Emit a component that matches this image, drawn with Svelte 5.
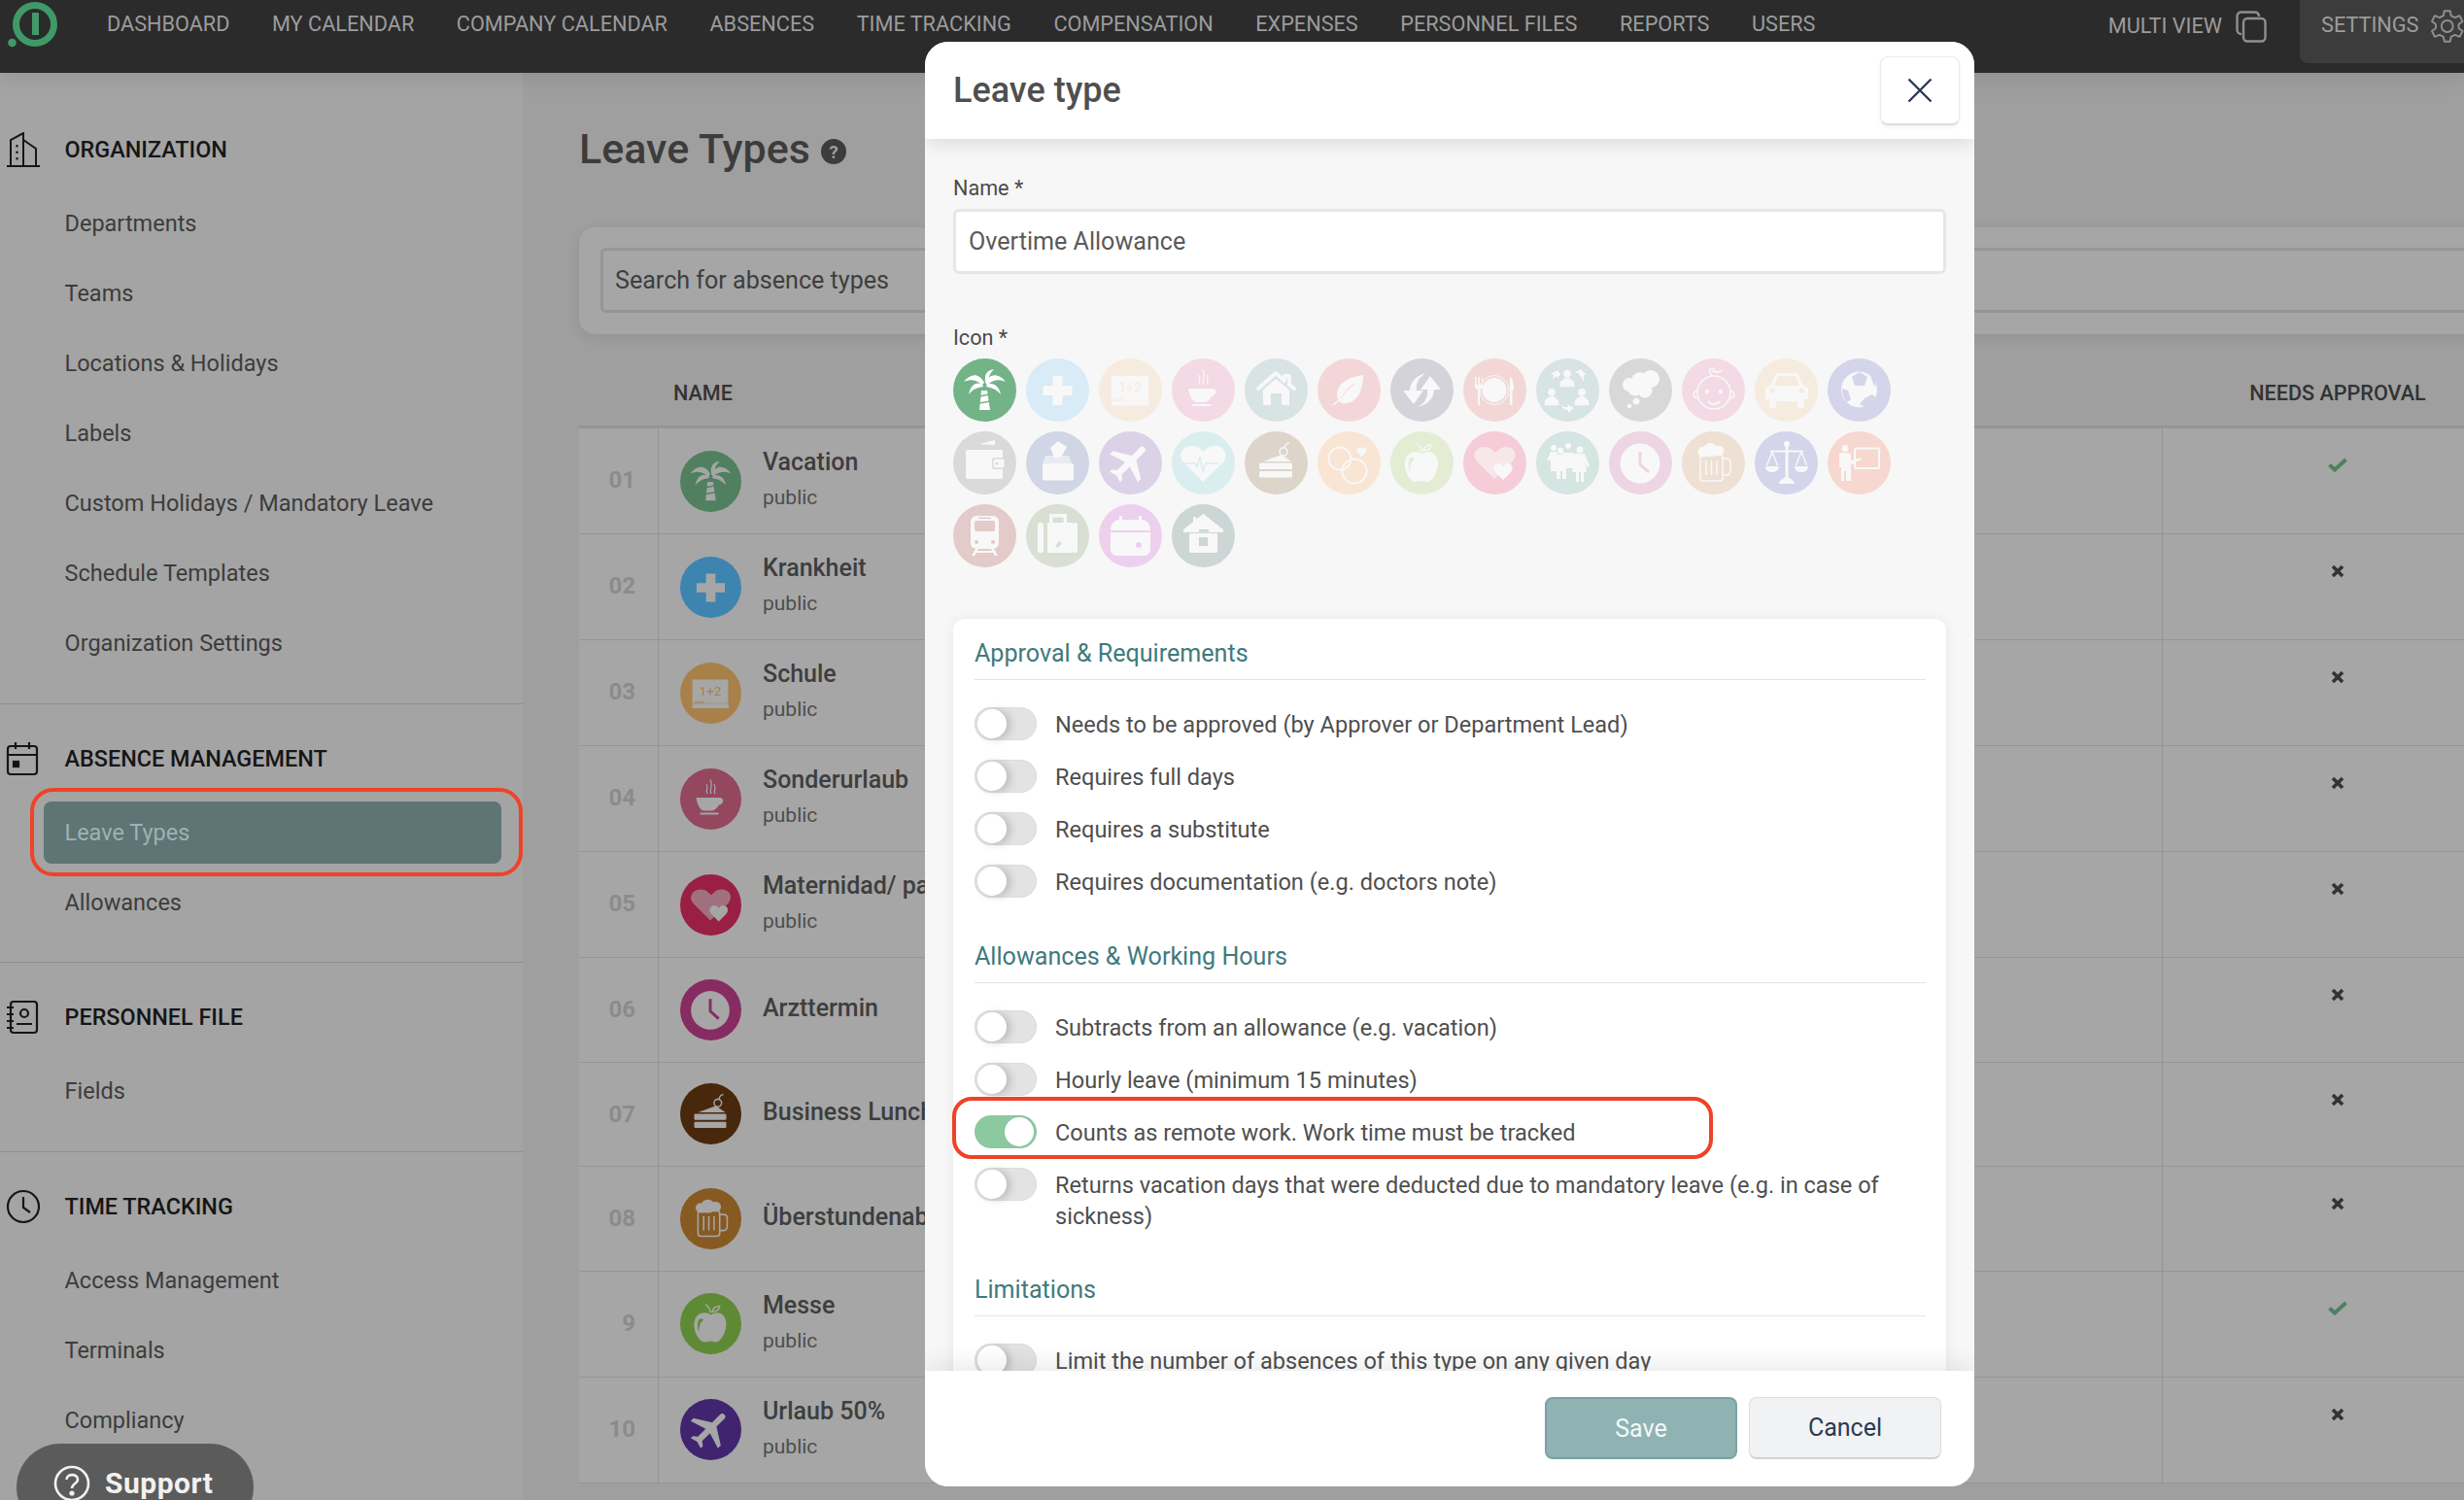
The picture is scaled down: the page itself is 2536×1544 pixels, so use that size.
<script>
  const person = (x, y, s = 1) => `<g transform="translate(${x} ${y}) scale(${s})"><circle cy="-7" r="3.6"/><path d="M-7 6 V3 C-7 0 -3 -1 -2 -3 H2 C3 -1 7 0 7 3 V6Z"/></g>`;
  const glyphs = [
    `<path d="M29 33 L35 33 L38 53 L27 53Z"/><path class="cs" stroke-width="1.5" d="M27 39 L37 37 M27 46 L38 44"/><path d="M32 25 C27 15 18 15 11 24 C18 21 24 22 30 27Z M33 25 C38 15 47 15 54 24 C47 21 41 22 35 27Z M33 24 C32 16 35 12 42 11 C38 15 36 19 36 24Z M30 26 C22 24 18 28 16 37 C20 32 24 30 31 29Z M35 26 C42 25 47 28 49 37 C45 32 40 30 34 29Z"/>`,
    `<path d="M27.5 18h10v10h10v10h-10v10h-10v-10h-10v-10h10z"/>`,
    `<rect x="13" y="18" width="38" height="25" rx="1"/><rect x="13" y="43.500" width="38.500" height="5"/><rect class="cut" x="15" y="41" width="11" height="2.500" opacity=".5"/><text class="cut" x="32" y="35" text-anchor="middle" font-family="Roboto, sans-serif" font-size="14">1+2</text>`,
    `<path d="M17 31 H42 C47 31 47 38 41 39 C39 43 36 45 33 45 H26 C21 45 18 38 17 31Z"/><rect x="21" y="47" width="20" height="2" rx="1"/><path d="M29 27 C26 23 31 21 28 17 M33 27 C30 22 36 19 32 12 M37 27 C35 23 39 21 36 17" fill="none" stroke="currentColor" stroke-width="1.300"/>`,
    `<path d="M14 31 L32 15 L41 23 V18 H46 V27 L51 31" fill="none" stroke="currentColor" stroke-width="4" stroke-linejoin="round" stroke-linecap="round"/><path d="M19 48 V32 L32 21 L46 32 V48 H38 V36 H27 V48Z"/>`,
    `<path d="M47 17 C31 19 21 26 20 36 C20 41 22 45 25 46 C38 48 47 36 47 17Z"/><path d="M16 48 L24 41 C28 34 32 30 38 26" class="cs" stroke-width="1" /><path d="M16 48 L24 41" fill="none" stroke="currentColor" stroke-width="1.500"/>`,
    `<path d="M37 15 C30 19 26 24 27 33 H34 L24 47 L13 33 H20 C20 24 27 17 37 15Z"/><path d="M28 50 C35 46 39 41 38 32 H31 L41 18 L52 32 H45 C45 41 38 48 28 50Z"/>`,
    `<path d="M12 19 V28 C12 31 14 32 15 32 V48 H17 V32 C18 32 20 31 20 28 V19 H19 V27 H17 V19 H15.500 V27 H13.500 V19Z"/><circle cx="32" cy="32.500" r="12.500"/><circle cx="32" cy="32.500" r="15" fill="none" stroke="currentColor" stroke-width="1"/><path d="M48 48 V19 C51 20 52 25 52 33 H50.500 V48Z"/>`,
    `${person(32, 23, 1.05)}${person(16, 42, 1.05)}${person(47, 42, 1.05)}<path d="M22 12 L15 16 L18 17 L17 23 C18 20 20 19 22 18 L22 21 L25 16Z M46 11 L40 14 L43 15 C45 17 47 20 49 24 L49 17 L52 17Z M26 49 C29 50 31 50 33 50 L32 47 L39 51 L33 56 L33 53 C30 53 28 52 26 49Z"/>`,
    `<circle cx="21" cy="27" r="7"/><circle cx="32" cy="23" r="9"/><circle cx="43" cy="21" r="9"/><circle cx="37" cy="33" r="7.500"/><circle cx="27" cy="31" r="7.500"/><circle cx="28" cy="44" r="3.500"/><circle cx="21" cy="49" r="2.300"/>`,
    `<g fill="none" stroke="currentColor" stroke-width="1.600"><circle cx="33" cy="35" r="17"/><path d="M16 33 C11 34 11 40 16 41 M50 33 C55 34 55 40 50 41 M31 18 C27 13 29 9 32 10 C35 11 32 15 31 13 M33 13 C36 15 39 14 41 12"/><path d="M27 44 C30 48 36 48 39 44" stroke-width="2"/></g><circle cx="26" cy="34" r="2.300"/><circle cx="40" cy="34" r="2.300"/>`,
    `<path d="M11 30 L16 28 L21 17 C22 15 23 15 25 15 H41 C43 15 44 15 45 17 L50 28 L55 30 V42 H51 V49 C51 52 44 52 44 49 V44 H22 V49 C22 52 15 52 15 49 V42 H11Z"/><path class="cut" d="M20 28 L24 18 H42 L46 28Z"/><circle class="cut" cx="18" cy="33" r="2.500"/><circle class="cut" cx="48" cy="33" r="2.500"/>`,
    `<circle cx="32.500" cy="32" r="18.500"/><path class="cut" d="M25 19 L33 14 L41 19 L38 28 L28 28Z M15 31 L21 33 L24 42 L20 45 C17 42 15 37 15 31Z M38 41 L46 37 L49 40 C47 45 43 48 39 50 L33 47Z M44 17 L49 22 L50 29 L47 26Z"/>`,
    `<path d="M28 12 L44 8 L44 13Z" transform="translate(-1 1)"/><rect x="13" y="19" width="38" height="30" rx="2"/><rect class="cut" x="40" y="27" width="14" height="12" rx="3"/><rect x="41.500" y="28.500" width="11" height="9" rx="2"/><circle class="cut" cx="45" cy="33" r="1.500"/>`,
    `<path d="M17 33 L20 25 H44 L47 33Z" opacity=".6"/><rect x="17" y="33" width="32" height="17.500" rx="2"/><path d="M25 17 L33 10 L42 16 L36 27 H29Z"/>`,
    `<g transform="translate(32.500 32.500) rotate(45) scale(2.150) translate(-12 -12)"><path d="M21 16v-2l-8-5V3.500a1.500 1.500 0 0 0-3 0V9l-8 5v2l8-2.500V19l-2 1.500V22l3.500-1 3.500 1v-1.500L13 19v-5.500l8 2.500z"/></g>`,
    `<path d="M32 52 L13 33 C5 24 12 14 21 15 C27 15 30 18 32.500 21 C35 18 38 15 44 15 C53 14 60 24 52 33Z"/><path class="cs" stroke-width="1.500" d="M11 33 H24 L26 37 L29 26 L32 41 L35 33 H48"/>`,
    `<path d="M19 31 L38 24 L48 31Z"/><rect x="15" y="32.500" width="34" height="6.500" rx="1"/><rect x="15" y="41" width="34" height="6.500" rx="1"/><circle cx="40" cy="21" r="4" fill="none" stroke="currentColor" stroke-width="1.500"/><path d="M41 17 C42 14 44 12 46 12" fill="none" stroke="currentColor" stroke-width="1.500"/>`,
    `<g fill="none" stroke="currentColor" stroke-width="2"><circle cx="23" cy="28" r="11.500"/><circle cx="38" cy="41" r="12.500"/></g><path d="M45 26 L41 21 C39 17 44 15 45 18 C47 15 52 17 50 21Z"/>`,
    `<path d="M33 23 C38 19 48 20 49 32 C49 42 43 52 38 52 C36 52 34 51 32 51 C30 51 28 52 26 52 C21 52 14 42 15 32 C16 20 27 19 33 23Z"/><path class="cut" d="M21 27 C18 30 18 37 20 41 C20 35 21 31 25 28Z"/><path d="M32 21 C32 17 30 14 27 12 M34 20 C35 16 38 14 42 14 C42 17 39 20 34 20Z" fill="none" stroke="currentColor" stroke-width="1.500"/>`,
    `<path opacity=".6" d="M32 49 L14 31 C8 23 14 16 22 16 C27 16 30 19 33 22 C36 19 39 16 44 16 C52 16 57 23 51 31Z"/><path d="M41 50 L33 42 C29 37 33 33 36 33 C38 33 40 34 41 36 C42 34 44 33 46 33 C49 33 53 37 49 42Z"/>`,
    `<circle cx="18" cy="17" r="3"/><circle cx="33" cy="15" r="3"/><circle cx="25" cy="20" r="3.200"/><circle cx="45" cy="19" r="3.500"/><path d="M11 30 L15 21 H21 L24 30 V41 H15 V30Z M27 22 H39 L41 38 H28Z M19 24 H31 L36 36 L32 37 L31 33 V49 H27 V41 H25 V49 H21 V33 L19 37 L15 36Z M40 23 H50 L55 36 L52 37 L50 31 L52 42 H49 V52 H46 V42 H44 V52 H41 V42 H37 L40 31 L37 37 L34 36Z"/>`,
    `<circle cx="32" cy="33" r="20.500"/><path class="cs" stroke-width="3" d="M32 21 V34 L41 42"/>`,
    `<g fill="none" stroke="currentColor" stroke-width="1.600"><rect x="19" y="24" width="23" height="27" rx="3"/><path d="M42 28 H46 C49 28 50 30 50 32 V40 C50 44 48 45 46 45 H42 M25 30 V45 M30.500 30 V45 M36 30 V45" /></g><path d="M17 23 C15 19 19 15 23 16 C25 11 33 11 35 15 C40 13 45 17 43 22 C42 26 38 25 35 25 C31 27 27 26 25 26 C22 27 18 26 17 23Z"/>`,
    `<rect x="31.500" y="14" width="3" height="34"/><circle cx="33" cy="13" r="3"/><path d="M25 54 C25 50 30 49 31 47 H35 C36 49 41 50 41 54Z"/><rect x="16" y="19.500" width="34" height="2"/><path d="M11 36 H25 C25 44 11 44 11 36Z M41 36 H55 C55 44 41 44 41 36Z"/><path d="M18 21 L12.500 35 M18 21 L23.500 35 M48 21 L42.500 35 M48 21 L53.500 35" fill="none" stroke="currentColor" stroke-width="1.500"/>`,
    `<circle cx="18" cy="17.500" r="3.500"/><path d="M12 24 C12 22 14 22 15 22 H21 C23 22 24 23 24 25 V30 L34 27 L35 29 L24 34 V51 H19 V41 H17 V51 H14 V37 H12Z"/><rect x="28" y="17.500" width="25" height="20.500" rx="1.500" fill="none" stroke="currentColor" stroke-width="2"/>`,
    `<rect x="18" y="12" width="29" height="34" rx="6"/><rect class="cut" x="22" y="17" width="21" height="11" rx="2"/><rect class="cut" x="26" y="13.500" width="13" height="1.500"/><circle class="cut" cx="24" cy="39" r="2"/><circle class="cut" cx="41" cy="39" r="2"/><path d="M23 46 L19 53 H22 L24 50 H41 L43 53 H46 L42 46 H39 L40 48 H25 L26 46Z"/>`,
    `<path d="M24 19 V10 H42 V19 H38.500 V13.500 H27.500 V19Z"/><rect x="22" y="19" width="26" height="31" rx="1"/><rect x="12" y="19" width="6" height="31" rx="2"/><rect x="48" y="19" width="5" height="31" rx="2"/><path class="cut" d="M30 43 L34 38 L37 40 L33 45Z"/>`,
    `<path d="M12 27 C12 20 16 16 21 16 V12 H24 V16 H41 V12 H44 V16 C49 16 53 20 53 27Z"/><path d="M12 29 H53 V46 C53 50 50 53 46 53 H19 C15 53 12 50 12 46Z"/><circle class="cut" cx="41" cy="42" r="3"/>`,
    `<path d="M12 26 L22 18 V13 H25 V15.500 L32.500 10 L53 26 V29 H12Z"/><path d="M18 30 H47 V48 C47 50 46 50 45 50 H20 C19 50 18 50 18 48Z"/><rect class="cut" x="28" y="26" width="10" height="2.500"/><rect class="cut" x="28" y="34" width="9" height="9"/>`
  ];
  const fades = ['#72b388','#d8ebf7','#f6ebdf','#f3dae4','#d8e3e4','#f3d7d8','#d3d3d9','#f3d7d7','#d8e3e3','#d8d8d8','#f3dae4','#f6ebdf','#d4d4ea','#dadada','#d0d6e5','#dbd2e7','#daedef','#ddd4ca','#f9e5d3','#e3edd3','#f5ccd8','#d5e5e1','#edd5e3','#eee0d2','#d4d4ea','#f6d8d0','#e2cbc8','#d9dfd2','#edd0ee','#ccd6d4'];

  const nav = ['DASHBOARD','MY CALENDAR','COMPANY CALENDAR','ABSENCES','TIME TRACKING','COMPENSATION','EXPENSES','PERSONNEL FILES','REPORTS','USERS'];
  const sections = [
    { title: 'ORGANIZATION', icon: 'building', items: ['Departments','Teams','Locations & Holidays','Labels','Custom Holidays / Mandatory Leave','Schedule Templates','Organization Settings'] },
    { title: 'ABSENCE MANAGEMENT', icon: 'calendar', items: ['Leave Types','Allowances'] },
    { title: 'PERSONNEL FILE', icon: 'book', items: ['Fields'] },
    { title: 'TIME TRACKING', icon: 'clock', items: ['Access Management','Terminals','Compliancy'] }
  ];
  const rows = [
    { n:'01', name:'Vacation', pub:true, g:0, c:'#50805f', ok:true },
    { n:'02', name:'Krankheit', pub:true, g:1, c:'#3d85b0' },
    { n:'03', name:'Schule', pub:true, g:2, c:'#a8814a' },
    { n:'04', name:'Sonderurlaub', pub:true, g:3, c:'#94475f' },
    { n:'05', name:'Maternidad/ paternidad', pub:true, g:20, c:'#9a1f44' },
    { n:'06', name:'Arzttermin', pub:false, g:22, c:'#872c62' },
    { n:'07', name:'Business Lunch', pub:false, g:17, c:'#47280c' },
    { n:'08', name:'Überstundenabbau', pub:false, g:23, c:'#875a22' },
    { n:'9', name:'Messe', pub:true, g:19, c:'#5f8a35', ok:true },
    { n:'10', name:'Urlaub 50%', pub:true, g:15, c:'#41246f' }
  ];
  const groups = [
    { title:'Approval & Requirements', opts:[
      { t:'Needs to be approved (by Approver or Department Lead)' },
      { t:'Requires full days' }, { t:'Requires a substitute' }, { t:'Requires documentation (e.g. doctors note)' } ] },
    { title:'Allowances & Working Hours', opts:[
      { t:'Subtracts from an allowance (e.g. vacation)' }, { t:'Hourly leave (minimum 15 minutes)' },
      { t:'Counts as remote work. Work time must be tracked', on:true },
      { t:'Returns vacation days that were deducted due to mandatory leave (e.g. in case of sickness)' } ] },
    { title:'Limitations', opts:[ { t:'Limit the number of absences of this type on any given day' } ] }
  ];
</script>

<div class="page">
  <header class="topbar">
    <svg class="logo" viewBox="0 0 62 50" width="62" height="50" aria-label="logo">
      <circle cx="36" cy="25" r="19.500" fill="none" stroke="#3f9a68" stroke-width="7"/>
      <rect x="33" y="13" width="7" height="23" fill="#3f9a68"/>
      <circle cx="12.500" cy="44" r="4.300" fill="#3f9a68"/>
    </svg>
    <nav class="nav">
      {#each nav as n}<span>{n}</span>{/each}
    </nav>
    <div class="multi">
      <span>MULTI VIEW</span>
      <svg viewBox="0 0 32 33" width="32" height="33" fill="none" stroke="#8f8f8f" stroke-width="2.400">
        <path d="M6 24 C3 24 1.500 22 1.500 20 V6 C1.500 3 3.500 1.500 6 1.500 H19 C22 1.500 24 3 24 6"/>
        <rect x="8" y="8" width="22.500" height="23.500" rx="4"/>
      </svg>
    </div>
    <div class="settings">
      <span>SETTINGS</span>
      <svg viewBox="0 0 36 36" width="36" height="36" fill="none" stroke="#8f8f8f" stroke-width="2">
        <circle cx="18" cy="18" r="6"/>
        <path d="M15 2 H21 L22 7 L26 9 L31 7 L34 13 L30 16 V20 L34 23 L31 29 L26 27 L22 29 L21 34 H15 L14 29 L10 27 L5 29 L2 23 L6 20 V16 L2 13 L5 7 L10 9 L14 7Z" stroke-linejoin="round"/>
      </svg>
    </div>
  </header>

  <div class="shell">
    <aside class="sidebar">
      {#each sections as s}
        <section class="side-section">
          <h3>
            <span class="side-icon">
              {#if s.icon === 'building'}
                <svg viewBox="0 0 36 36" width="36" height="36" fill="none" stroke="#161616" stroke-width="2"><path d="M1 35 H35 M5 35 V8 L18 1 V35 M18 8 L31 17 V35"/><path d="M11.500 13 V31" stroke-dasharray="2.500 4"/></svg>
              {:else if s.icon === 'calendar'}
                <svg viewBox="0 0 34 36" width="34" height="36" fill="none" stroke="#161616" stroke-width="2.200"><rect x="2" y="5" width="30" height="29" rx="3"/><path d="M2 14 H32 M10 1 V8 M24 1 V8"/><rect x="8" y="21" width="5" height="5" fill="#161616"/></svg>
              {:else if s.icon === 'book'}
                <svg viewBox="0 0 34 36" width="34" height="36" fill="none" stroke="#161616" stroke-width="2.200"><rect x="5" y="2" width="27" height="32" rx="3"/><circle cx="19" cy="14" r="4"/><path d="M11 25 H27 M1 8 H8 M1 15 H8 M1 22 H8 M1 29 H8"/></svg>
              {:else}
                <svg viewBox="0 0 36 36" width="36" height="36" fill="none" stroke="#161616" stroke-width="2.200"><circle cx="18" cy="18" r="16"/><path d="M18 8 V19 L25 24"/></svg>
              {/if}
            </span>
            {s.title}
          </h3>
          <ul>
            {#each s.items as it}
              <li class:active={it === 'Leave Types'}><span>{it}</span></li>
            {/each}
          </ul>
        </section>
      {/each}
    </aside>

    <main class="main">
      <h1>Leave Types
        <svg viewBox="0 0 24 24" width="26" height="26"><circle cx="12" cy="12" r="12" fill="#3c3c3c"/><text x="12" y="18" text-anchor="middle" font-family="Roboto, sans-serif" font-weight="700" font-size="17" fill="#a0a0a0">?</text></svg>
      </h1>
      <div class="search-card">
        <div class="search-input">Search for absence types</div>
      </div>
      <div class="table">
        <div class="thead">
          <span class="th-name">NAME</span>
          <span class="th-appr">NEEDS APPROVAL</span>
        </div>
        {#each rows as r}
          <div class="row" class:tall={r.pub}>
            <div class="num">{r.n}</div>
            <div class="cell-name">
              <div class="tile small" style="background:{r.c};--c:{r.c};color:#a6a6a6">
                <svg viewBox="0 0 65 65">{@html glyphs[r.g]}</svg>
              </div>
              <div class="rtext">
                <div class="rname">{r.name}</div>
                {#if r.pub}<div class="rpub">public</div>{/if}
              </div>
            </div>
            <div class="cell-appr">
              {#if r.ok}
                <svg class="check" viewBox="0 0 20 16" width="20" height="16"><path d="M1.500 8.500 L7 13.500 L18.500 3" fill="none" stroke="#4f8060" stroke-width="4"/></svg>
              {:else}
                <svg viewBox="0 0 14 14" width="14" height="14"><path d="M2 2 L12 12 M12 2 L2 12" stroke="#333" stroke-width="3.600"/></svg>
              {/if}
            </div>
          </div>
        {/each}
      </div>
    </main>
  </div>

  <button class="support">
    <svg viewBox="0 0 38 38" width="38" height="38" fill="none" stroke="#f1f1f1" stroke-width="2.600"><circle cx="19" cy="19" r="17"/><path d="M13.500 15 C13.500 8.500 25 8.500 25 15 C25 19 19 19 19 24"/><circle cx="19" cy="29" r="1.300" fill="#f1f1f1"/></svg>
    Support
  </button>

  <div class="modal">
    <div class="m-head">
      <h2>Leave type</h2>
      <button class="close" aria-label="Close">
        <svg viewBox="0 0 26 26" width="26" height="26" stroke="#2c3a50" stroke-width="2.400"><path d="M1.500 1.500 L24.500 24.500 M24.500 1.500 L1.500 24.500"/></svg>
      </button>
    </div>
    <div class="m-body">
      <div class="label">Name *</div>
      <div class="text-input">Overtime Allowance</div>
      <div class="label icon-label">Icon *</div>
      <div class="picker">
        {#each glyphs as g, i}
          <div class="tile" style="background:{fades[i]};--c:{fades[i]};color:{i === 0 ? '#fff' : '#f8f8f8'}">
            <svg viewBox="0 0 65 65">{@html g}</svg>
          </div>
        {/each}
      </div>
      <div class="card">
        {#each groups as g}
          <h4>{g.title}</h4>
          <div class="opts">
            {#each g.opts as o}
              <div class="opt">
                <span class="toggle" class:on={o.on}><i></i></span>
                <span class="opt-text">{o.t}</span>
              </div>
            {/each}
          </div>
        {/each}
      </div>
    </div>
    <div class="m-foot">
      <button class="btn save">Save</button>
      <button class="btn cancel">Cancel</button>
    </div>
  </div>

  <div class="mark mark-side"></div>
  <div class="mark mark-row"></div>
</div>

<style>
  :global(body) { margin: 0; background: #a3a3a3; overflow: hidden; }
  :global(.cut) { fill: var(--c); }
  :global(.cs) { fill: none; stroke: var(--c); }

  .page { position: relative; width: 2536px; height: 1544px; overflow: hidden; font-family: Roboto, sans-serif; }

  .topbar { height: 75px; background: #2b2b2b; display: flex; align-items: flex-start; color: #9c9c9c; font-size: 21.7px; line-height: 50px; position: relative; z-index: 1; box-shadow: 0 4px 24px rgba(0,0,0,.1); }
  .logo { flex: none; margin-right: 48px; }
  .nav { display: flex; gap: 43.500px; flex: 1; }
  .multi { display: flex; align-items: center; gap: 14px; height: 54px; margin-right: 34px; }
  .multi span { line-height: 50px; }
  .settings { width: 169px; height: 65px; background: #3c3c3c; border-radius: 0 0 0 8px; display: flex; gap: 11px; padding: 9px 0 0 22px; box-sizing: border-box; line-height: 34px; }

  .shell { display: flex; height: 1469px; overflow: hidden; }

  .sidebar { flex: none; width: 538px; background: #a4a4a4; padding-top: 23px; box-sizing: border-box; box-shadow: 6px 0 30px rgba(0,0,0,.04); }
  .side-section { padding: 36px 0 25.500px; border-bottom: 1px solid #8f8f8f; }
  .side-section:last-child { border-bottom: 0; }
  h3 { margin: 0 0 20px; height: 40px; display: flex; align-items: center; font-size: 23.4px; font-weight: 500; color: #161616; }
  .side-icon { width: 66.500px; flex: none; display: flex; padding-left: 6px; box-sizing: border-box; }
  ul { list-style: none; margin: 0; padding: 0; }
  li { height: 72px; display: flex; align-items: center; padding-left: 66.500px; font-size: 23.500px; color: #3c3c3c; position: relative; }
  li span { position: relative; }
  li.active { color: #9db2b2; }
  li.active::before { content: ''; position: absolute; left: 45px; top: 4px; width: 471px; height: 64px; background: #5f7475; border-radius: 8px; }

  .main { flex: 1; min-width: 0; background: #9f9f9f; padding: 48px 0 0 58px; box-sizing: border-box; overflow: hidden; }
  h1 { margin: 0 0 51px; height: 60px; line-height: 60px; font-size: 43px; font-weight: 500; color: #3c3c3c; display: flex; align-items: center; gap: 11px; white-space: nowrap; }
  h1 svg { margin-top: 6px; }
  .search-card { width: 1990px; height: 110px; background: #a6a6a6; border-radius: 16px; padding: 21px 22px; box-sizing: border-box; box-shadow: 0 4px 14px rgba(0,0,0,.08); margin-bottom: 29px; }
  .search-input { height: 67px; border: 3px solid #969696; border-radius: 6px; box-sizing: border-box; line-height: 61px; padding-left: 12px; font-size: 25.100px; color: #3e3e3e; }

  .table { width: 1990px; background: #a6a6a6; }
  .thead { height: 68px; background: #9f9f9f; border-bottom: 3px solid #959595; box-sizing: border-box; display: grid; grid-template-columns: 1630px 360px; align-items: center; font-size: 21.600px; font-weight: 500; color: #333; padding-bottom: 2px; }
  .th-name { padding-left: 97px; }
  .th-appr { text-align: center; }
  .row { display: grid; grid-template-columns: 82px 1548px 360px; height: 107.500px; border-bottom: 1px solid #949494; box-sizing: border-box; }
  .row.tall { height: 109px; }
  .num { border-right: 1px solid #949494; text-align: right; padding-right: 23px; align-self: stretch; line-height: 106.500px; font-size: 24px; font-weight: 700; color: #8b8b8b; }
  .cell-name { display: flex; align-items: center; gap: 22px; padding-left: 22px; border-right: 1px solid #949494; }
  .rtext { padding-bottom: 3px; }
  .rname { font-size: 25px; font-weight: 500; color: #3e3e3e; line-height: 32px; white-space: nowrap; }
  .rpub { font-size: 21px; color: #4e4e4e; line-height: 30px; margin-top: 5px; }
  .cell-appr { display: flex; justify-content: center; padding-top: 31px; box-sizing: border-box; }
  .cell-appr svg { display: block; }
  .cell-appr .check { margin-top: -2px; }

  .tile { width: 65px; height: 65px; border-radius: 50%; flex: none; }
  .tile svg { display: block; width: 100%; height: 100%; fill: currentColor; }
  .tile.small { width: 63px; height: 63px; }

  .support { position: absolute; left: 17px; top: 1486px; width: 244px; height: 90px; border: 0; border-radius: 45px; background: #5b5b5b; color: #f1f1f1; font: 700 30px Roboto, sans-serif; display: flex; align-items: flex-start; gap: 15px; padding: 22px 0 0 38px; box-sizing: border-box; letter-spacing: .5px; line-height: 38px; }

  .modal { position: absolute; left: 952px; top: 43px; width: 1080px; height: 1487px; border-radius: 24px; background: #f7f7f7; overflow: hidden; display: flex; flex-direction: column; z-index: 2; }
  .m-head { flex: none; height: 100px; background: #fff; box-shadow: 0 4px 20px rgba(0,0,0,.12); display: flex; align-items: center; justify-content: space-between; padding: 0 15px 0 29px; position: relative; z-index: 2; }
  h2 { margin: 0; font-size: 36px; font-weight: 500; color: #4f4f4f; }
  .close { width: 82px; height: 71px; background: #fff; border: 1px solid #ebebeb; border-bottom: 2px solid #ddd; border-radius: 8px; display: flex; align-items: center; justify-content: center; padding: 0; box-shadow: 0 2px 4px rgba(0,0,0,.06); }
  .m-body { flex: 1; min-height: 0; overflow: hidden; padding: 36px 29px 0; }
  .label { height: 30px; line-height: 30px; font-size: 21.600px; font-weight: 400; color: #4b4b4b; margin-bottom: 6px; }
  .icon-label { margin: 50px 0 7px; padding-top: 1px; }
  .text-input { height: 67px; width: 1022px; margin-left: 0; background: #fff; border: 3px solid #e6e6e6; border-radius: 6px; box-sizing: border-box; line-height: 61px; padding-left: 13px; font-size: 25.100px; color: #5a5a5a; }
  .picker { display: grid; grid-template-columns: repeat(13, 65px); column-gap: 10px; row-gap: 10px; margin-top: -1px; }

  .card { margin-top: 53px; width: 1022px; background: #fff; border-radius: 12px; box-shadow: 0 0 14px rgba(0,0,0,.06); padding: 16px 21px 40px 22px; box-sizing: border-box; }
  h4 { margin: 40.500px 0 0; height: 47px; line-height: 40px; border-bottom: 1.500px solid #e4e4e4; box-sizing: border-box; font-size: 25.100px; font-weight: 400; color: #3f7a7c; }
  h4:first-child { margin-top: 0; }
  .opts { padding-top: 28px; display: flex; flex-direction: column; gap: 20px; }
  .opt { display: flex; gap: 19px; align-items: flex-start; }
  .opt-text { font-size: 23.550px; line-height: 32px; color: #4f4f4f; padding-top: 2px; }
  .toggle { flex: none; width: 64px; height: 34px; border-radius: 17px; background: #e3e3e3; position: relative; box-shadow: inset 0 0 0 1px #ddd; }
  .toggle i { position: absolute; left: 3px; top: 2px; width: 30px; height: 30px; border-radius: 50%; background: #fff; box-shadow: 4px 1px 8px rgba(0,0,0,.18); }
  .toggle.on { background: #8cc8a0; box-shadow: none; }
  .toggle.on i { left: 31px; box-shadow: 0 0 0 1px #8cc8a0; }

  .m-foot { flex: none; height: 119px; background: #fff; box-shadow: 0 -6px 24px rgba(0,0,0,.09); position: relative; display: flex; justify-content: flex-end; gap: 12px; padding: 27px 34px 0 0; box-sizing: border-box; }
  .btn { width: 198px; height: 64px; border-radius: 8px; font: 400 25px Roboto, sans-serif; }
  .save { background: #8fb3b3; border: 2px solid #7ba3a3; color: #f4f8f8; }
  .cancel { background: #f1f2f4; border: 1px solid #dddde0; border-bottom: 2px solid #d2d2d6; color: #2c3a50; }

  .mark { position: absolute; border: 4px solid #ee4327; box-sizing: border-box; pointer-events: none; z-index: 3; }
  .mark-side { left: 31px; top: 811px; width: 507px; height: 91px; border-radius: 24px; }
  .mark-row { left: 980px; top: 1129px; width: 783px; height: 64px; border-radius: 20px; }
</style>
